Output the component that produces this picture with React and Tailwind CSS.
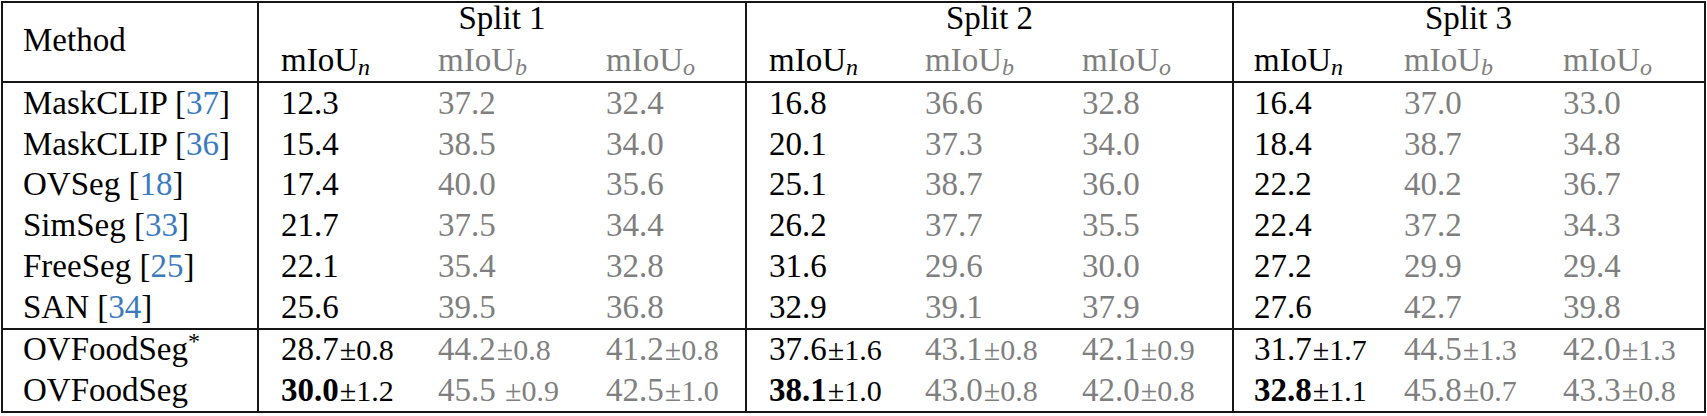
import React from "react";

const SPLITS = [
  { label: "Split 1", w: "w-[488px]", cols: ["w-[179px] pl-[22px]", "w-[168px]", "w-[139px]"] },
  { label: "Split 2", w: "w-[487px]", cols: ["w-[178px] pl-[22px]", "w-[157px]", "w-[150px]"] },
  { label: "Split 3", w: "w-[469px]", cols: ["w-[170px] pl-[20px]", "w-[159px]", "w-[140px]"] },
];

const ROWS = [
  { name: "MaskCLIP", cite: "37", v: [["12.3"], ["37.2"], ["32.4"], ["16.8"], ["36.6"], ["32.8"], ["16.4"], ["37.0"], ["33.0"]] },
  { name: "MaskCLIP", cite: "36", v: [["15.4"], ["38.5"], ["34.0"], ["20.1"], ["37.3"], ["34.0"], ["18.4"], ["38.7"], ["34.8"]] },
  { name: "OVSeg", cite: "18", v: [["17.4"], ["40.0"], ["35.6"], ["25.1"], ["38.7"], ["36.0"], ["22.2"], ["40.2"], ["36.7"]] },
  { name: "SimSeg", cite: "33", v: [["21.7"], ["37.5"], ["34.4"], ["26.2"], ["37.7"], ["35.5"], ["22.4"], ["37.2"], ["34.3"]] },
  { name: "FreeSeg", cite: "25", v: [["22.1"], ["35.4"], ["32.8"], ["31.6"], ["29.6"], ["30.0"], ["27.2"], ["29.9"], ["29.4"]] },
  { name: "SAN", cite: "34", v: [["25.6"], ["39.5"], ["36.8"], ["32.9"], ["39.1"], ["37.9"], ["27.6"], ["42.7"], ["39.8"]] },
];

const OURS = [
  {
    name: "OVFoodSeg",
    star: true,
    v: [
      ["28.7", "±0.8"], ["44.2", "±0.8"], ["41.2", "±0.8"],
      ["37.6", "±1.6"], ["43.1", "±0.8"], ["42.1", "±0.9"],
      ["31.7", "±1.7"], ["44.5", "±1.3"], ["42.0", "±1.3"],
    ],
  },
  {
    name: "OVFoodSeg",
    bold: true,
    v: [
      ["30.0", "±1.2"], ["45.5 ", "±0.9"], ["42.5", "±1.0"],
      ["38.1", "±1.0"], ["43.0", "±0.8"], ["42.0", "±0.8"],
      ["32.8", "±1.1"], ["45.8", "±0.7"], ["43.3", "±0.8"],
    ],
  },
];

function Metric({ sub }) {
  return (
    <span className="whitespace-nowrap">
      mIoU<sub className="text-[24px] italic relative top-[4px] align-baseline">{sub}</sub>
    </span>
  );
}

function Row({ method, values, bold }) {
  return (
    <div className="flex h-[40.75px] items-center leading-none">
      <div className="w-[256px] h-full border-r-2 border-[#161616] flex items-center pl-[20px] whitespace-nowrap">
        <span>{method}</span>
      </div>
      {SPLITS.map((s, si) => (
        <div
          key={s.label}
          className={`${s.w} h-full flex ${si < 2 ? "border-r-2 border-[#161616]" : ""}`}
        >
          {s.cols.map((c, ci) => {
            const [num, pm] = values[si * 3 + ci];
            const isNew = ci === 0;
            return (
              <div
                key={ci}
                className={`${c} h-full flex items-center whitespace-pre ${isNew ? "text-black" : "text-[#7f7f7f]"}`}
              >
                <span>
                  <span className={bold && isNew ? "font-bold" : ""}>{num}</span>
                  {pm && <span className="text-[30px] ml-[1px]">{pm}</span>}
                </span>
              </div>
            );
          })}
        </div>
      ))}
    </div>
  );
}

export default function App() {
  return (
    <div className="w-[1707px] h-[416px] bg-white pt-[1px] pl-[1px] text-[33px] text-black font-['Liberation_Serif','Times_New_Roman',serif]">
      <div className="w-[1705px] border-2 border-[#161616] flex flex-col">
        <div className="flex h-[80px] border-b-2 border-[#161616]">
          <div className="w-[256px] border-r-2 border-[#161616] flex items-center pl-[20px] pb-[2px]">Method</div>
          {SPLITS.map((s, si) => (
            <div key={s.label} className={`${s.w} flex flex-col ${si < 2 ? "border-r-2 border-[#161616]" : ""}`}>
              <div className="h-[28px] pt-[2px] flex items-center justify-center leading-none">{s.label}</div>
              <div className="flex flex-1 items-center leading-none pt-[8px]">
                {s.cols.map((c, ci) => (
                  <div key={ci} className={`${c} ${ci === 0 ? "text-black" : "text-[#7f7f7f]"}`}>
                    <Metric sub={["n", "b", "o"][ci]} />
                  </div>
                ))}
              </div>
            </div>
          ))}
        </div>

        {ROWS.map((r, i) => (
          <Row
            key={i}
            values={r.v}
            method={
              <>
                {r.name} [<span className="text-[#3b7bbd]">{r.cite}</span>]
              </>
            }
          />
        ))}

        <div className="border-t-2 border-[#161616]">
          {OURS.map((r, i) => (
            <Row
              key={i}
              values={r.v}
              bold={r.bold}
              method={
                <>
                  {r.name}
                  <sup className="text-[24px] relative -top-[11px] align-baseline">{r.star ? "*" : ""}</sup>
                </>
              }
            />
          ))}
        </div>
      </div>
    </div>
  );
}
